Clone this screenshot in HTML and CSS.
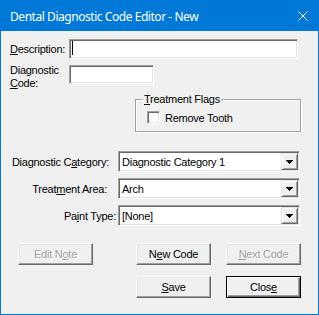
FILE: index.html
```html
<!DOCTYPE html>
<html>
<head>
<meta charset="utf-8">
<link rel="stylesheet" href="styles.css">
</head>
<body>
<div class="window">
  <div class="titlebar">
    <span class="title">Dental Diagnostic Code Editor - New</span>
    <svg class="close-icon" viewBox="0 0 10 10" width="10" height="10"><path d="M0.5 0.5L9.5 9.5M9.5 0.5L0.5 9.5" stroke="#fff" stroke-width="1" fill="none"/></svg>
  </div>
  <div class="client">
    <div class="row-desc">
      <span class="lbl-desc"><u>D</u>escription:</span>
      <div class="field field-wide"><span class="caret"></span></div>
    </div>
    <div class="row-code">
      <span class="lbl-code">Diagnostic<br><u>C</u>ode:</span>
      <div class="field field-short"></div>
    </div>
    <fieldset class="flags">
      <legend><u>T</u>reatment Flags</legend>
      <div class="check-row"><span class="checkbox"></span><span>Remove Tooth</span></div>
    </fieldset>
    <div class="combos">
      <div class="combo-row">
        <span class="clabel clabel-cat">Diagnostic C<u>a</u>tegory:</span>
        <div class="combo"><span class="cval">Diagnostic Category 1</span><span class="cbtn"><svg class="arrow" viewBox="0 0 7 4" width="7" height="4"><path d="M0 0h7v1H0zM1 1h5v1H1zM2 2h3v1H2zM3 3h1v1H3z" fill="#000"/></svg></span></div>
      </div>
      <div class="combo-row">
        <span class="clabel clabel-area">Treat<u>m</u>ent Area:</span>
        <div class="combo"><span class="cval">Arch</span><span class="cbtn"><svg class="arrow" viewBox="0 0 7 4" width="7" height="4"><path d="M0 0h7v1H0zM1 1h5v1H1zM2 2h3v1H2zM3 3h1v1H3z" fill="#000"/></svg></span></div>
      </div>
      <div class="combo-row">
        <span class="clabel clabel-paint">Pa<u>i</u>nt Type:</span>
        <div class="combo"><span class="cval">[None]</span><span class="cbtn"><svg class="arrow" viewBox="0 0 7 4" width="7" height="4"><path d="M0 0h7v1H0zM1 1h5v1H1zM2 2h3v1H2zM3 3h1v1H3z" fill="#000"/></svg></span></div>
      </div>
    </div>
    <div class="buttons">
      <div class="btn disabled c1">Edit N<u>o</u>te</div>
      <div class="btn c3">N<u>e</u>w Code</div>
      <div class="btn disabled c5"><u>N</u>ext Code</div>
      <div class="btn c3"><u>S</u>ave</div>
      <div class="btn default c5">Clos<u>e</u></div>
    </div>
  </div>
</div>
</body>
</html>
```
FILE: styles.css
```css
* { box-sizing: border-box; }
html, body { margin: 0; padding: 0; }
body {
  width: 319px;
  height: 315px;
  overflow: hidden;
  background: #f0f0f0;
  color: #000;
  font-family: "Liberation Sans", Arial, sans-serif;
  font-size: 11px;
  letter-spacing: -0.25px;
}
.window {
  width: 319px;
  height: 315px;
  display: flex;
  flex-direction: column;
}
.titlebar {
  height: 31px;
  flex: none;
  background: #0078d7;
  color: #fff;
  display: flex;
  align-items: center;
  padding-left: 10px;
  font-family: "Noto Sans", "Open Sans", sans-serif;
  font-size: 12px;
  letter-spacing: -0.45px;
}
.title { flex: 1; padding-top: 1px; }
.close-icon { margin: 1px 11px 0 0; display: block; }
.client {
  flex: 1;
  background: #f0f0f0;
  border: 1px solid #0078d7;
  border-top: 0;
}
.field {
  background: #fff;
  border: 1px solid;
  border-color: #a0a0a0 #fff #fff #a0a0a0;
  box-shadow: inset 1px 1px 0 #696969, inset -1px -1px 0 #e3e3e3;
}
.row-desc {
  display: flex;
  align-items: center;
  margin-top: 8px;
  padding-left: 9px;
  height: 20px;
}
.lbl-desc { width: 59px; }
.field-wide { width: 229px; height: 20px; }
.caret {
  display: block;
  width: 1px;
  height: 14px;
  background: #000;
  margin: 1px 0 0 2px;
}
.row-code {
  display: flex;
  align-items: flex-start;
  margin-top: 6px;
  padding-left: 9px;
}
.lbl-code { width: 59px; line-height: 13px; margin-top: -1px; }
.field-short { width: 85px; height: 19px; }
.flags {
  margin: 3px 0 0 134px;
  width: 166px;
  min-width: 0;
  padding: 0 0 7px 0;
  border: 1px solid #a0a0a0;
  box-shadow: inset 1px 1px 0 #fff, 1px 1px 0 #fff;
}
.flags legend {
  margin-left: 7px;
  padding: 0 1px;
  line-height: 13px;
  background: #f0f0f0;
}
.check-row {
  display: flex;
  align-items: center;
  gap: 5px;
  margin: 5px 0 0 11px;
  height: 13px;
}
.checkbox {
  width: 13px;
  height: 13px;
  background: #fff;
  border: 1px solid;
  border-color: #a0a0a0 #fff #fff #a0a0a0;
  box-shadow: inset 1px 1px 0 #696969, inset -1px -1px 0 #e3e3e3;
}
.combos {
  margin-top: 19px;
  display: flex;
  flex-direction: column;
  gap: 6px;
}
.combo-row {
  display: flex;
  align-items: center;
  height: 21px;
}
.clabel { width: 117px; text-align: right; }
.clabel-cat { padding-right: 9px; }
.clabel-area { padding-right: 11px; }
.clabel-paint { padding-right: 2px; }
.combo {
  width: 182px;
  height: 21px;
  display: flex;
  align-items: center;
  background: #fff;
  border: 1px solid;
  border-color: #a0a0a0 #fff #fff #a0a0a0;
  box-shadow: inset 1px 1px 0 #696969, inset -1px -1px 0 #e3e3e3;
  padding-right: 1px;
}
.cval { flex: 1; padding-left: 3px; }
.cbtn {
  width: 17px;
  height: 17px;
  display: flex;
  align-items: center;
  justify-content: center;
  background: #f0f0f0;
  border: 1px solid;
  border-color: #e3e3e3 #696969 #696969 #e3e3e3;
  box-shadow: inset 1px 1px 0 #fff, inset -1px -1px 0 #a0a0a0;
}
.arrow { display: block; shape-rendering: crispEdges; }
.buttons {
  display: grid;
  grid-template-columns: 75px 43px 75px 15px 75px;
  grid-auto-rows: 22px;
  row-gap: 11px;
  margin: 17px 0 0 17px;
}
.c1 { grid-column: 1; }
.c3 { grid-column: 3; }
.c5 { grid-column: 5; }
.btn {
  display: flex;
  align-items: center;
  justify-content: center;
  background: #f0f0f0;
  border: 1px solid;
  border-color: #fff #696969 #696969 #fff;
  box-shadow: inset -1px -1px 0 #a0a0a0, inset 1px 1px 0 #e3e3e3;
}
.btn.disabled { color: #a0a0a0; text-shadow: 1px 1px 0 #fff; }
.btn.default {
  border-color: #000;
  box-shadow: inset 1px 1px 0 #fff, inset -1px -1px 0 #696969, inset -2px -2px 0 #a0a0a0;
}
```
